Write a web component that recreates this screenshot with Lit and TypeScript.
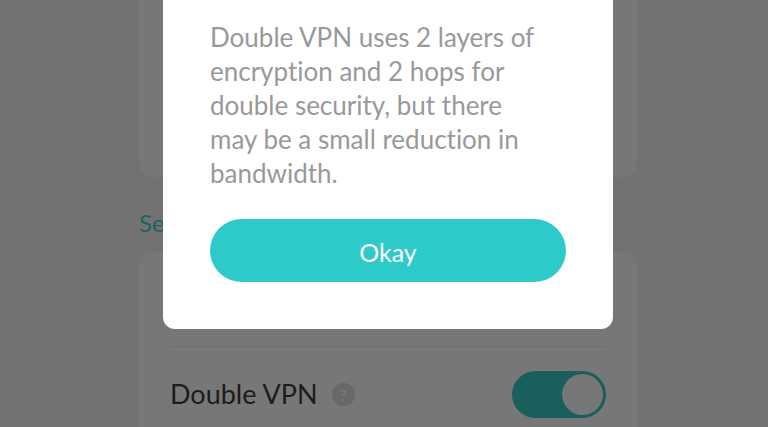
import { LitElement, html, css } from "lit";
import { customElement, property, state } from "lit/decorators.js";

@customElement("toggle-row")
class ToggleRow extends LitElement {
  @property() label = "";
  @property({ type: Boolean }) checked = false;

  static styles = css`
    :host {
      display: flex;
      align-items: center;
      gap: 14px;
      height: 94px;
    }
    .label {
      font-size: 27px;
      line-height: 36px;
      color: #1c1c1c;
    }
    .help {
      width: 23px;
      height: 23px;
      padding: 0;
      border: 0;
      border-radius: 50%;
      background: #696969;
      color: #777;
      font: 700 16px/23px "Lato", sans-serif;
      text-align: center;
    }
    .switch {
      appearance: none;
      box-sizing: border-box;
      display: flex;
      justify-content: flex-start;
      width: 94px;
      height: 47px;
      margin: 0 0 0 auto;
      padding: 3px;
      border-radius: 24px;
      background: #666;
    }
    .switch:checked {
      justify-content: flex-end;
      background: #185f5d;
    }
    .switch::before {
      content: "";
      width: 41px;
      height: 41px;
      border-radius: 50%;
      background: #777;
    }
  `;

  render() {
    return html`
      <label class="label" for="switch">${this.label}</label>
      <button class="help" type="button" aria-label="Help">?</button>
      <input class="switch" id="switch" type="checkbox" role="switch" .checked=${this.checked} />
    `;
  }
}

@customElement("app-root")
class AppRoot extends LitElement {
  @state() private open = true;

  static styles = css`
    :host {
      display: block;
      position: relative;
      box-sizing: border-box;
      height: 100vh;
      padding-left: 8px;
      overflow: hidden;
      background: #727272;
      font-family: "Lato", sans-serif;
      font-variant-ligatures: none;
    }
    .page {
      width: 96%;
      max-width: 498px;
      margin: 0 auto;
    }
    .card {
      box-sizing: border-box;
      padding: 0 31px;
      border-radius: 14px;
      background: #777;
    }
    .previous {
      height: 177px;
      border-top-left-radius: 0;
      border-top-right-radius: 0;
    }
    .heading {
      margin: 0;
      padding: 30px 0 13px;
      font-size: 24px;
      line-height: 32px;
      font-weight: 400;
      color: #1d6361;
    }
    .item {
      height: 94px;
      border-bottom: 1px solid #6f6f6f;
    }
    .layer {
      position: absolute;
      inset: 0;
      display: flex;
      justify-content: center;
      align-items: flex-start;
      padding-left: 8px;
    }
    .dialog {
      box-sizing: border-box;
      width: 90%;
      max-width: 450px;
      padding: 20px 47px 47px;
      border-radius: 0 0 12px 12px;
      background: #fff;
    }
    .message {
      max-width: 340px;
      margin: 0 0 29px;
      font-size: 26px;
      line-height: 34px;
      color: #999;
    }
    .okay {
      display: block;
      width: 100%;
      height: 63px;
      padding: 2px 0 0;
      border: 0;
      border-radius: 32px;
      background: #2ecaca;
      color: #fff;
      font: 400 25px/34px "Lato", sans-serif;
    }
  `;

  render() {
    return html`
      <main class="page">
        <section class="card previous"></section>
        <h2 class="heading">Se</h2>
        <section class="card">
          <div class="item"></div>
          <toggle-row label="Double VPN" checked></toggle-row>
        </section>
      </main>
      ${this.open
        ? html`<div class="layer">
            <div class="dialog" role="dialog" aria-modal="true" aria-describedby="message">
              <p class="message" id="message">
                Double VPN uses 2 layers of encryption and 2 hops for double security, but there
                may be a small reduction in bandwidth.
              </p>
              <button class="okay" type="button" @click=${() => (this.open = false)}>Okay</button>
            </div>
          </div>`
        : null}
    `;
  }
}
